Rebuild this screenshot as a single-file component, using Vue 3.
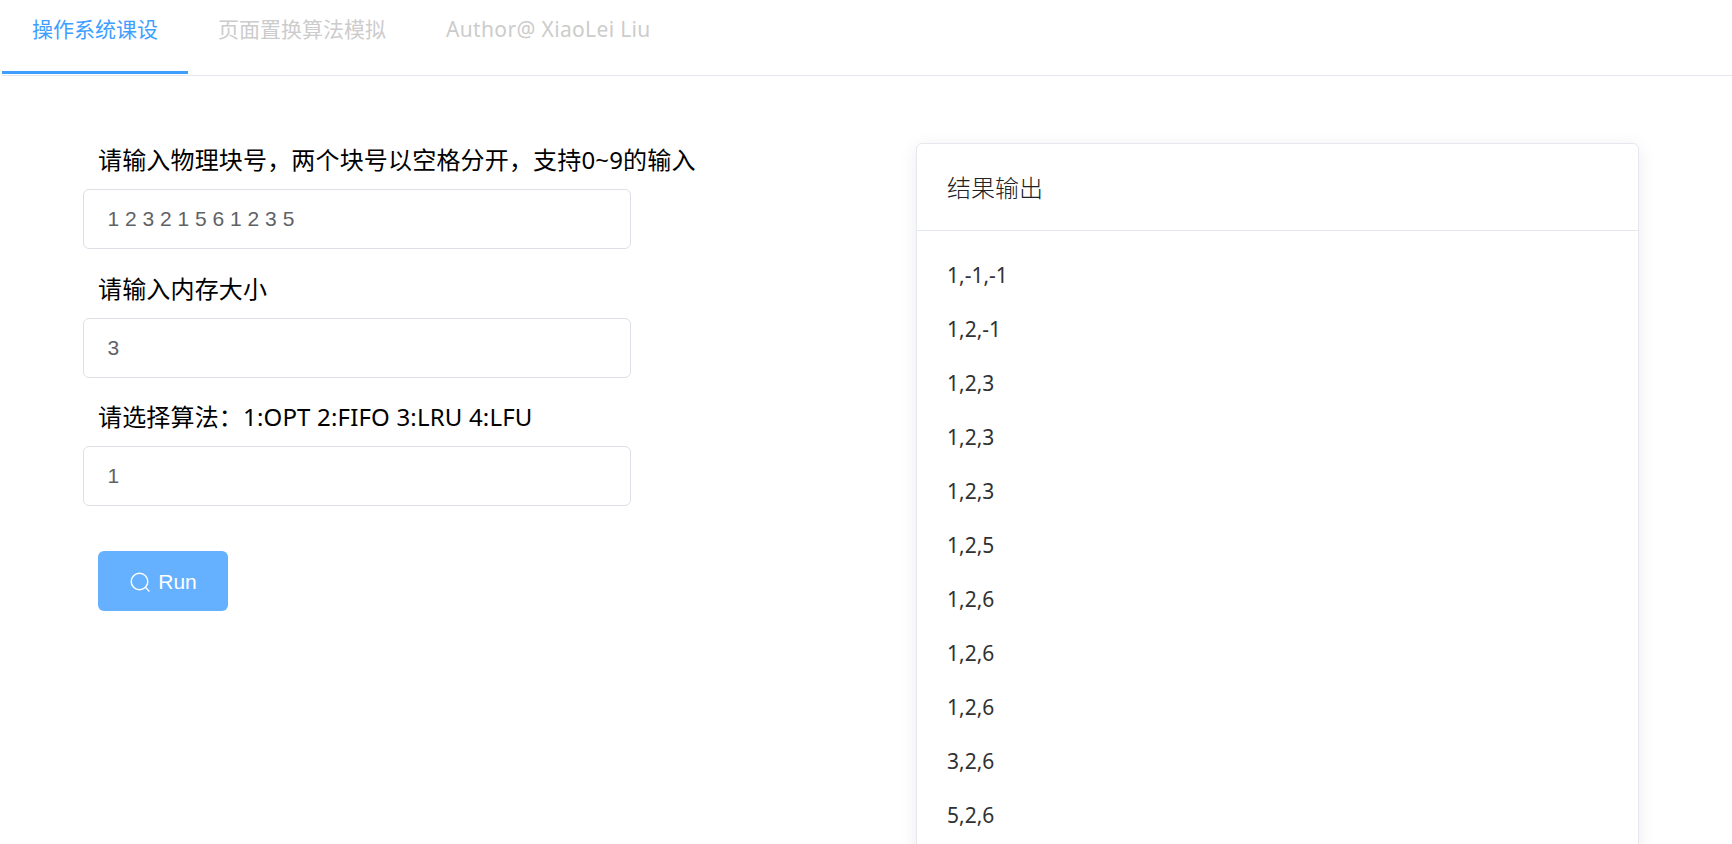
<script setup>
const tabs = ['操作系统课设', '页面置换算法模拟', 'Author@ XiaoLei Liu']
const fields = [
  { label: '请输入物理块号，两个块号以空格分开，支持0~9的输入', value: '1 2 3 2 1 5 6 1 2 3 5' },
  { label: '请输入内存大小', value: '3' },
  { label: '请选择算法：1:OPT 2:FIFO 3:LRU 4:LFU', value: '1' }
]
const rows = ['1,-1,-1', '1,2,-1', '1,2,3', '1,2,3', '1,2,3', '1,2,5', '1,2,6', '1,2,6', '1,2,6', '3,2,6', '5,2,6']
</script>

<template>
  <div class="page">
    <div class="tabs">
      <div v-for="(t, i) in tabs" :key="t" class="tab" :class="{ active: i === 0 }">{{ t }}</div>
    </div>
    <div class="main">
      <div class="form">
        <template v-for="f in fields" :key="f.label">
          <div class="label">{{ f.label }}</div>
          <input class="input" :value="f.value" />
        </template>
        <button class="run">
          <svg class="icon" viewBox="0 0 20 20" fill="none" stroke="currentColor" stroke-width="1.4">
            <circle cx="9.5" cy="9.5" r="8.3" />
            <path d="M15.6 15.6 L19 19" stroke-linecap="round" />
          </svg>
          <span>Run</span>
        </button>
      </div>
      <div class="card">
        <div class="card-head">结果输出</div>
        <div class="card-body">
          <div v-for="(r, i) in rows" :key="i" class="row">{{ r }}</div>
        </div>
      </div>
    </div>
  </div>
</template>

<style>
html, body { overflow: hidden; background: #fff; }
</style>

<style scoped>
.page {
  height: 844px;
  overflow: hidden;
  padding-left: 2px;
  box-sizing: border-box;
  font-family: "Noto Sans", "Noto Sans CJK SC", sans-serif;
}
.tabs {
  display: flex;
  height: 76px;
  box-sizing: border-box;
  border-bottom: 1px solid #e4e7ed;
}
.tab {
  height: 74px;
  box-sizing: border-box;
  padding: 0 30px;
  line-height: 58px;
  font-size: 21px;
  color: #ccc;
  border-bottom: 3px solid transparent;
}
.tab:nth-child(3) {
  letter-spacing: 0.35px;
}
.tab.active {
  color: #409eff;
  border-bottom-color: #409eff;
}
.main {
  display: flex;
  padding-top: 67px;
}
.form {
  width: 914px;
  padding-left: 81px;
  margin-top: -1px;
  box-sizing: border-box;
  flex: none;
}
.label {
  padding-left: 15px;
  font-size: 24px;
  letter-spacing: 0.17px;
  line-height: 36px;
  color: #000;
  margin-bottom: 11px;
  white-space: nowrap;
}
.input {
  display: block;
  width: 548px;
  height: 60px;
  box-sizing: border-box;
  border: 1.5px solid #dcdfe6;
  border-radius: 6px;
  padding: 0 23.5px;
  margin-bottom: 21.5px;
  font-family: "Liberation Sans", sans-serif;
  font-size: 21px;
  color: #606266;
  background: #fff;
  outline: none;
}
.run {
  display: flex;
  align-items: center;
  justify-content: center;
  gap: 8px;
  width: 130px;
  height: 60px;
  margin: 45px 0 0 15px;
  padding: 1px 0 0 1px;
  border: none;
  border-radius: 6px;
  background: #66b1ff;
  color: #fff;
  font-family: "Liberation Sans", sans-serif;
  font-size: 21px;
}
.icon {
  width: 20px;
  height: 20px;
  flex: none;
}
.card {
  width: 723px;
  flex: none;
  box-sizing: border-box;
  border: 1.5px solid #e6e8f0;
  border-radius: 6px;
  background: #fff;
  box-shadow: 0 3px 18px rgba(0, 0, 0, 0.08);
}
.card-head {
  height: 87px;
  box-sizing: border-box;
  padding: 0 30px;
  line-height: 88px;
  font-size: 24px;
  font-weight: 300;
  color: #202225;
  border-bottom: 1.5px solid #e6e8f0;
}
.card-body {
  padding: 17px 30px 18px;
}
.row {
  height: 54px;
  line-height: 54px;
  font-size: 21px;
  color: #303133;
}
</style>
